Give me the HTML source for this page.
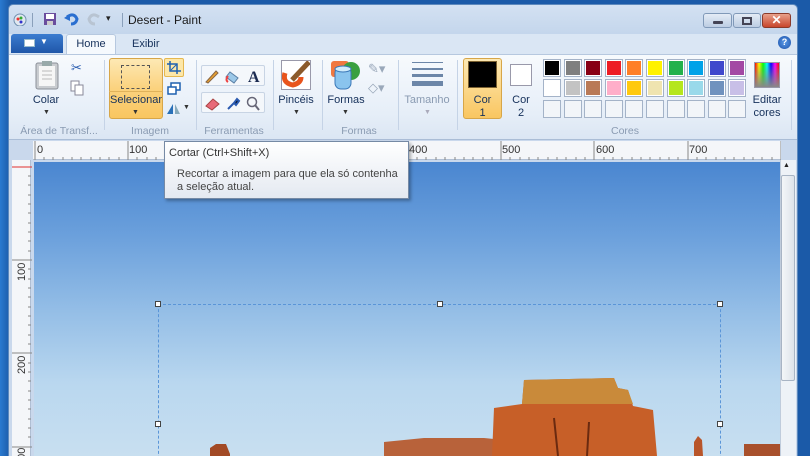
<!DOCTYPE html>
<html><head><meta charset="utf-8"><style>
*{margin:0;padding:0;box-sizing:border-box}
html,body{width:810px;height:456px;overflow:hidden}
body{position:relative;font-family:"Liberation Sans",sans-serif;font-size:11px;color:#1e395b;background:#1d5fa8}
#w{position:absolute;left:0;top:0;width:810px;height:456px;overflow:hidden}
.a{position:absolute}
.lbl{position:absolute;font-size:10.5px;color:#8a9bb2;text-align:center}
.t{position:absolute;font-size:11px;color:#15305a;text-align:center;line-height:13px}
.sep{position:absolute;top:60px;width:1px;height:70px;background:#c5d3e6}
.sw{position:absolute;width:18px;height:18px;border:1px solid #a4b3c8;padding:1px;background:#fff}
.sw i{display:block;width:100%;height:100%}
.arr{position:absolute;font-size:7px;color:#333}
</style></head><body><div id="w">
<div class="a" style="left:0;top:0;width:810px;height:456px;background:linear-gradient(90deg,#2a7ad0,#1b5aa8 10px,#1b5aa8)"></div>
<div class="a" style="left:8px;top:4px;width:790px;height:452px;background:#c4d5ea;border-radius:5px 5px 0 0;border:1px solid #5d89bd;border-bottom:none"></div>
<div class="a" style="left:9px;top:5px;width:788px;height:29px;background:linear-gradient(#d3e1f2,#c4d6ec);border-radius:5px 5px 0 0"></div>
<svg class="a" style="left:12px;top:12px" width="16" height="14"><circle cx="8" cy="8" r="6" fill="#e0e8f0" stroke="#7090b0"/><circle cx="6" cy="7" r="1.5" fill="#e33"/><circle cx="9" cy="6" r="1.5" fill="#3a3"/><circle cx="9" cy="10" r="1.5" fill="#33c"/></svg>
<div class="a" style="left:32px;top:13px;width:1px;height:14px;background:#8aa0bb"></div>
<svg class="a" style="left:43px;top:12px" width="14" height="14"><rect x="1" y="1" width="12" height="12" fill="#6a4d9e"/><rect x="3" y="2" width="8" height="5" fill="#fff"/><rect x="4" y="9" width="6" height="4" fill="#ccc"/></svg>
<svg class="a" style="left:64px;top:12px" width="16" height="14"><path d="M3 5 Q10 0 13 7 Q12 12 7 12" stroke="#2a6fd0" stroke-width="3" fill="none"/><path d="M0 6 L6 2 L6 9Z" fill="#2a6fd0"/></svg>
<svg class="a" style="left:86px;top:12px" width="16" height="14"><path d="M13 5 Q6 0 3 7 Q4 12 9 12" stroke="#b8c4d2" stroke-width="3" fill="none"/></svg>
<div class="a" style="left:106px;top:13px;font-size:9px;color:#222">▾</div>
<div class="a" style="left:122px;top:13px;width:1px;height:14px;background:#8aa0bb"></div>
<div class="a" style="left:128px;top:13px;font-size:12px;color:#1a1a1a">Desert - Paint</div>
<div class="a" style="left:703px;top:13px;width:29px;height:15px;border:1px solid #8099b8;border-radius:3px;background:linear-gradient(#e4ecf6,#bccde3)"><div class="a" style="left:9px;top:7px;width:10px;height:3px;background:#445;border-radius:1px"></div></div>
<div class="a" style="left:733px;top:13px;width:28px;height:15px;border:1px solid #8099b8;border-radius:3px;background:linear-gradient(#e4ecf6,#bccde3)"><div class="a" style="left:8px;top:3px;width:10px;height:8px;border:2px solid #445"></div></div>
<div class="a" style="left:762px;top:13px;width:29px;height:15px;border:1px solid #8a3a2a;border-radius:3px;background:linear-gradient(#e8a08a,#c8462c);color:#fff;font-size:12px;font-weight:bold;text-align:center;line-height:13px">✕</div>
<div class="a" style="left:9px;top:34px;width:788px;height:20px;background:#dae6f4"></div>
<div class="a" style="left:11px;top:34px;width:52px;height:19px;background:linear-gradient(#3b7cd0,#1f56a8);border-radius:3px 3px 0 0"><div class="a" style="left:13px;top:5px;width:11px;height:8px;background:#fff;border:1px solid #9bc"></div><div class="a" style="left:29px;top:3px;color:#fff;font-size:8px">▼</div></div>
<div class="a" style="left:66px;top:34px;width:50px;height:21px;background:#f5f9fd;border:1px solid #b6c8df;border-bottom:none;border-radius:3px 3px 0 0;text-align:center;line-height:19px;color:#15305a">Home</div>
<div class="a" style="left:132px;top:38px;color:#15305a">Exibir</div>
<div class="a" style="left:778px;top:36px;width:13px;height:13px;border-radius:50%;background:radial-gradient(#5a9ae8,#1b50a8);color:#fff;font-size:9px;font-weight:bold;text-align:center;line-height:13px">?</div>
<div class="a" style="left:9px;top:54px;width:788px;height:86px;background:linear-gradient(#f7fafd,#e6eef8 70%,#dbe6f3);border-top:1px solid #b6c8df;border-bottom:1px solid #aabdd6"></div>
<svg class="a" style="left:34px;top:60px" width="26" height="30"><rect x="2" y="3" width="22" height="26" rx="2" fill="#c9ccd0" stroke="#8c9099"/><rect x="5" y="6" width="16" height="20" fill="#f6f6f6"/><rect x="8" y="1" width="10" height="5" fill="#9aa" /><path d="M8 11h10M8 15h10M8 19h10" stroke="#bbb"/></svg>
<div class="t" style="left:28px;top:94px;width:36px">Colar</div>
<div class="arr" style="left:43px;top:109px">▼</div>
<div class="a" style="left:71px;top:60px;font-size:13px;color:#2a5db0">✂</div>
<svg class="a" style="left:70px;top:80px" width="14" height="16"><rect x="1" y="1" width="8" height="10" fill="#fff" stroke="#889"/><rect x="5" y="5" width="8" height="10" fill="#fff" stroke="#889"/></svg>
<div class="lbl" style="left:14px;top:125px;width:90px">Área de Transf...</div>
<div class="sep" style="left:104px"></div>
<div class="a" style="left:109px;top:58px;width:54px;height:61px;border:1px solid #d7a649;border-radius:3px;background:linear-gradient(#fde9b4,#fbd27e 50%,#f9c661)"></div>
<div class="a" style="left:121px;top:65px;width:29px;height:24px;border:1px dashed #555"></div>
<div class="a" style="left:109px;top:91px;width:54px;height:1px;background:#e0b25a"></div>
<div class="t" style="left:108px;top:94px;width:56px">Selecionar</div>
<div class="arr" style="left:132px;top:109px">▼</div>
<div class="a" style="left:164px;top:58px;width:20px;height:19px;border:1px solid #e5b850;border-radius:2px;background:#fde7a8"></div>
<svg class="a" style="left:167px;top:61px" width="14" height="13"><path d="M3 0v10h11M0 3h10v10" stroke="#1e60b0" stroke-width="1.5" fill="none"/><path d="M4 9l6-6" stroke="#1e60b0"/></svg>
<svg class="a" style="left:167px;top:82px" width="14" height="13"><rect x="4" y="1" width="9" height="7" fill="#fff" stroke="#1e60b0" stroke-width="1.5"/><rect x="1" y="5" width="8" height="7" fill="#fff" stroke="#1e60b0" stroke-width="1.5"/></svg>
<svg class="a" style="left:166px;top:102px" width="22" height="13"><path d="M1 12L7 2V12Z" fill="#2a70b8"/><path d="M9 12V2L14 12Z" fill="#8ab"/></svg>
<div class="arr" style="left:183px;top:104px">▼</div>
<div class="lbl" style="left:110px;top:125px;width:80px">Imagem</div>
<div class="sep" style="left:196px"></div>
<div class="a" style="left:201px;top:65px;width:64px;height:21px;border:1px solid #c8d4e4;border-radius:2px;background:#f4f7fb"></div>
<div class="a" style="left:201px;top:92px;width:64px;height:21px;border:1px solid #c8d4e4;border-radius:2px;background:#f4f7fb"></div>
<svg class="a" style="left:204px;top:68px" width="60" height="16"><path d="M2 14L12 3l2 2L4 15z" fill="#e8a030" stroke="#864"/><path d="M26 4l8 6-4 5-8-6z" fill="#9cc8e8" stroke="#5a7fa5"/><path d="M24 8q-3 4 0 6" stroke="#e44" stroke-width="2" fill="none"/><text x="44" y="14" font-family="Liberation Serif" font-weight="bold" font-size="16" fill="#1a2a50">A</text></svg>
<svg class="a" style="left:204px;top:95px" width="60" height="16"><path d="M2 11l7-7 6 5-7 6z" fill="#e86a78" stroke="#a44"/><path d="M24 14l6-6M30 8l3-4 2 2-3 4z" stroke="#2a5ab0" stroke-width="2"/><circle cx="48" cy="7" r="4.5" fill="none" stroke="#667" stroke-width="1.5"/><path d="M51 10l4 5" stroke="#667" stroke-width="2"/></svg>
<div class="lbl" style="left:198px;top:125px;width:72px">Ferramentas</div>
<div class="sep" style="left:273px"></div>
<div class="a" style="left:281px;top:60px;width:30px;height:30px;border:1px solid #99a;background:#fff"></div>
<svg class="a" style="left:282px;top:61px" width="28" height="28"><path d="M27 1L10 19" stroke="#8b5a2b" stroke-width="5"/><path d="M3 12q-3 10 8 12q8-2 8-8" stroke="#e8541c" stroke-width="5" fill="none"/></svg>
<div class="t" style="left:275px;top:94px;width:42px">Pincéis</div>
<div class="arr" style="left:293px;top:109px">▼</div>
<div class="sep" style="left:322px"></div>
<svg class="a" style="left:329px;top:59px" width="34" height="32"><rect x="2" y="2" width="18" height="16" rx="3" fill="#f07840"/><circle cx="22" cy="12" r="9" fill="#3aa040"/><rect x="6" y="8" width="16" height="22" rx="6" fill="#8ac4ee" stroke="#3a78b8"/><ellipse cx="14" cy="10" rx="8" ry="3" fill="#d0ecfc" stroke="#3a78b8"/></svg>
<div class="t" style="left:324px;top:94px;width:44px">Formas</div>
<div class="arr" style="left:342px;top:109px">▼</div>
<div class="a" style="left:368px;top:61px;font-size:13px;color:#9aa8ba">✎▾</div>
<div class="a" style="left:368px;top:80px;font-size:13px;color:#9aa8ba">◇▾</div>
<div class="lbl" style="left:325px;top:125px;width:68px">Formas</div>
<div class="sep" style="left:398px"></div>
<div class="a" style="left:412px;top:62px;width:31px;height:1px;background:#6c86a8"></div>
<div class="a" style="left:412px;top:68px;width:31px;height:2px;background:#6c86a8"></div>
<div class="a" style="left:412px;top:74px;width:31px;height:3px;background:#6c86a8"></div>
<div class="a" style="left:412px;top:81px;width:31px;height:5px;background:#6c86a8"></div>
<div class="t" style="left:402px;top:94px;width:50px;color:#8a9bb2">Tamanho</div>
<div class="arr" style="left:424px;top:109px;color:#aab">▼</div>
<div class="sep" style="left:457px"></div>
<div class="a" style="left:463px;top:58px;width:39px;height:61px;border:1px solid #d7a649;border-radius:3px;background:linear-gradient(#fde9b4,#f9c661)"></div>
<div class="a" style="left:468px;top:61px;width:29px;height:27px;border:1px solid #7a6030;background:#000"></div>
<div class="t" style="left:463px;top:94px;width:39px">Cor<br>1</div>
<div class="a" style="left:510px;top:64px;width:22px;height:22px;border:1px solid #99a;background:#fff"></div>
<div class="t" style="left:501px;top:94px;width:40px">Cor<br>2</div>
<div class="sw" style="left:543px;top:59px"><i style="background:#000"></i></div>
<div class="sw" style="left:564px;top:59px"><i style="background:#7f7f7f"></i></div>
<div class="sw" style="left:584px;top:59px"><i style="background:#880015"></i></div>
<div class="sw" style="left:605px;top:59px"><i style="background:#ed1c24"></i></div>
<div class="sw" style="left:625px;top:59px"><i style="background:#ff7f27"></i></div>
<div class="sw" style="left:646px;top:59px"><i style="background:#fff200"></i></div>
<div class="sw" style="left:667px;top:59px"><i style="background:#22b14c"></i></div>
<div class="sw" style="left:687px;top:59px"><i style="background:#00a2e8"></i></div>
<div class="sw" style="left:708px;top:59px"><i style="background:#3f48cc"></i></div>
<div class="sw" style="left:728px;top:59px"><i style="background:#a349a4"></i></div>
<div class="sw" style="left:543px;top:79px"><i style="background:#fff"></i></div>
<div class="sw" style="left:564px;top:79px"><i style="background:#c3c3c3"></i></div>
<div class="sw" style="left:584px;top:79px"><i style="background:#b97a57"></i></div>
<div class="sw" style="left:605px;top:79px"><i style="background:#ffaec9"></i></div>
<div class="sw" style="left:625px;top:79px"><i style="background:#ffc90e"></i></div>
<div class="sw" style="left:646px;top:79px"><i style="background:#efe4b0"></i></div>
<div class="sw" style="left:667px;top:79px"><i style="background:#b5e61d"></i></div>
<div class="sw" style="left:687px;top:79px"><i style="background:#99d9ea"></i></div>
<div class="sw" style="left:708px;top:79px"><i style="background:#7092be"></i></div>
<div class="sw" style="left:728px;top:79px"><i style="background:#c8bfe7"></i></div>
<div class="sw" style="left:543px;top:100px;background:#f2f5f9"></div><div class="sw" style="left:564px;top:100px;background:#f2f5f9"></div><div class="sw" style="left:584px;top:100px;background:#f2f5f9"></div><div class="sw" style="left:605px;top:100px;background:#f2f5f9"></div><div class="sw" style="left:625px;top:100px;background:#f2f5f9"></div><div class="sw" style="left:646px;top:100px;background:#f2f5f9"></div><div class="sw" style="left:667px;top:100px;background:#f2f5f9"></div><div class="sw" style="left:687px;top:100px;background:#f2f5f9"></div><div class="sw" style="left:708px;top:100px;background:#f2f5f9"></div><div class="sw" style="left:728px;top:100px;background:#f2f5f9"></div>
<div class="a" style="left:754px;top:62px;width:26px;height:26px;border:1px solid #99a;background:linear-gradient(transparent,#888),linear-gradient(90deg,#f00,#ff0,#0f0,#0ff,#00f,#f0f,#f00)"></div>
<div class="t" style="left:746px;top:94px;width:42px">Editar<br>cores</div>
<div class="lbl" style="left:580px;top:125px;width:90px">Cores</div>
<div class="a" style="left:791px;top:60px;width:1px;height:70px;background:#c5d3e6"></div>
<div class="a" style="left:9px;top:140px;width:788px;height:316px;background:#c9d8ec"></div>
<div class="a" style="left:33px;top:141px;width:748px;height:19px;background:#f4f6f9;border-bottom:1px solid #b0bfd4"></div>
<svg class="a" style="left:33px;top:141px" width="748" height="20" font-family="Liberation Sans" font-size="11" fill="#333">
<text x="4" y="12">0</text><text x="96" y="12">100</text><text x="376" y="12">400</text><text x="469" y="12">500</text><text x="563" y="12">600</text><text x="656" y="12">700</text><text x="750" y="12">80</text>
<g stroke="#888"><path d="M2 0v19M95 0v19M188 0v19M281 0v19M375 0v19M468 0v19M561 0v19M655 0v19M748 0v19"/>
<path d="M11 16v3M20 16v3M30 16v3M39 16v3M48 16v3M58 16v3M67 16v3M76 16v3M86 16v3M104 16v3M114 16v3M123 16v3M384 16v3M393 16v3M403 16v3M412 16v3M422 16v3M431 16v3M440 16v3M450 16v3M459 16v3M477 16v3M487 16v3M496 16v3M505 16v3M515 16v3M524 16v3M533 16v3M543 16v3M552 16v3M571 16v3M580 16v3M589 16v3M599 16v3M608 16v3M617 16v3M627 16v3M636 16v3M645 16v3M664 16v3M673 16v3M683 16v3M692 16v3M701 16v3M711 16v3M720 16v3M729 16v3M739 16v3"/></g></svg>
<div class="a" style="left:12px;top:160px;width:19px;height:296px;background:#f4f6f9;border-right:1px solid #b0bfd4"></div>
<svg class="a" style="left:12px;top:160px" width="20" height="296" font-family="Liberation Sans" font-size="11" fill="#333">
<path d="M0 7h20" stroke="#e03030"/>
<g stroke="#888"><path d="M0 100h20M0 193h20M0 287h20"/><path d="M16 16h3M16 25h3M16 35h3M16 44h3M16 53h3M16 63h3M16 72h3M16 81h3M16 91h3M16 109h3M16 119h3M16 128h3M16 137h3M16 147h3M16 156h3M16 165h3M16 175h3M16 184h3M16 203h3M16 212h3M16 221h3M16 231h3M16 240h3M16 249h3M16 259h3M16 268h3M16 277h3"/></g>
<text transform="translate(13,121) rotate(-90)">100</text><text transform="translate(13,214) rotate(-90)">200</text><text transform="translate(13,306) rotate(-90)">300</text></svg>
<div class="a" style="left:34px;top:162px;width:746px;height:294px;background:linear-gradient(#4a86d0,#6ba0dc 25%,#93bde6 50%,#b9d7ef 75%,#c8dff0)"></div>
<svg class="a" style="left:34px;top:162px" width="746" height="294">
<path d="M350 294V280l40-4 60 0 30 3V294Z" fill="#b8623a"/>
<path d="M176 294v-8l6-4h10l4 10v2Z" fill="#a24a26"/>
<path d="M490 218l90 -2 4 10 10 2 5 16 20 4 4 46H458l2-48 28-4Z" fill="#c75f28"/>
<path d="M490 218l90-2 4 10 10 2 5 14H488Z" fill="#c98a3a"/>
<path d="M520 256l4 38M555 260l-2 34" stroke="#6a2a10" stroke-width="2"/>
<path d="M660 294v-14l4-6 4 4 1 16Z" fill="#b8552a"/>
<path d="M710 294v-12h36v12Z" fill="#a8502c"/>
</svg>
<div class="a" style="left:158px;top:304px;width:563px;height:160px;border:1px dashed #5a95d8"></div>
<div class="a" style="left:155px;top:301px;width:6px;height:6px;border:1px solid #444;background:#fff"></div>
<div class="a" style="left:437px;top:301px;width:6px;height:6px;border:1px solid #444;background:#fff"></div>
<div class="a" style="left:717px;top:301px;width:6px;height:6px;border:1px solid #444;background:#fff"></div>
<div class="a" style="left:155px;top:421px;width:6px;height:6px;border:1px solid #444;background:#fff"></div>
<div class="a" style="left:717px;top:421px;width:6px;height:6px;border:1px solid #444;background:#fff"></div>
<div class="a" style="left:780px;top:160px;width:16px;height:296px;background:#eef2f7;border-left:1px solid #c0ccdc"></div>
<div class="a" style="left:783px;top:162px;font-size:7px;color:#222">▲</div>
<div class="a" style="left:781px;top:175px;width:14px;height:206px;border:1px solid #a8b4c4;border-radius:2px;background:linear-gradient(90deg,#f4f6f8,#dde3ea)"></div>
<div class="a" style="left:164px;top:141px;width:245px;height:58px;background:linear-gradient(#fff,#e4e9f1);border:1px solid #768aa5;box-shadow:2px 2px 3px rgba(0,0,0,.3)">
<div class="a" style="left:4px;top:5px;font-size:11px;color:#333">Cortar (Ctrl+Shift+X)</div>
<div class="a" style="left:12px;top:26px;font-size:11px;line-height:13px;color:#444">Recortar a imagem para que ela só contenha<br>a seleção atual.</div></div>
</div></body></html>
